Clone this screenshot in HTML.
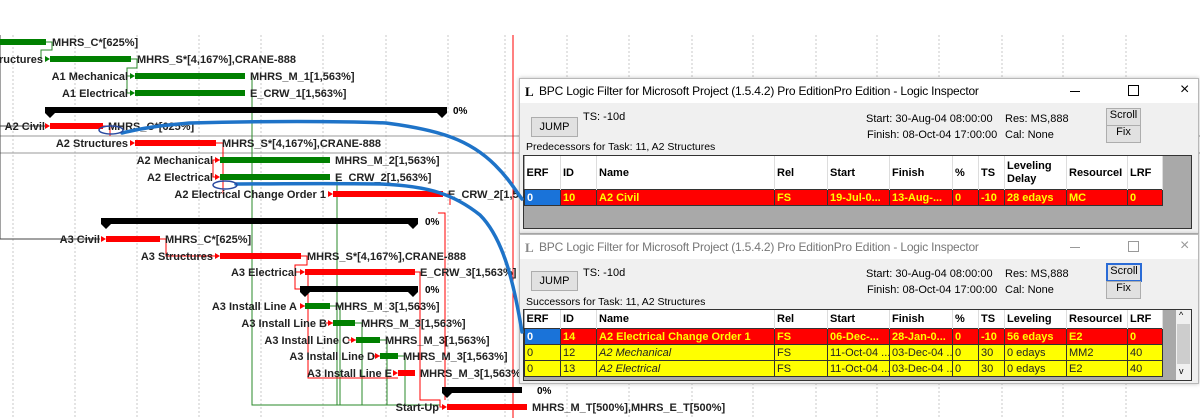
<!DOCTYPE html>
<html><head><meta charset="utf-8"><style>
body{margin:0;width:1200px;height:418px;overflow:hidden;background:#fff;position:relative;font-family:"Liberation Sans",Arial,sans-serif}
svg{position:absolute;left:0;top:0}
.dlg{position:absolute;left:519px;width:678px;background:#f0f0f0;border:1px solid #b8b8b8;box-shadow:0 0 4px rgba(0,0,0,.25);font-size:11px;color:#000}
.tb{height:24px;background:#fff;position:relative}
.tb .t{position:absolute;left:19px;top:5px;font-size:12px;letter-spacing:-.2px}
.ic{position:absolute;left:5px;top:5px;font:bold 13px "Liberation Serif",serif}
.btn{position:absolute;background:#e1e1e1;border:1px solid #adadad;text-align:center;font-size:11px}
.a{position:absolute;white-space:nowrap}
.mn{position:absolute;left:426px;top:12px;width:10px;height:1px;background:#000}
.grid{position:absolute;left:3px;width:667px;background:#a9a9a9;border:1px solid #333}
table{border-collapse:collapse;font-size:11px;table-layout:fixed;position:absolute;left:0;top:0}
td{border:1px solid #333;padding:0 2px;white-space:nowrap;overflow:hidden;height:15px}
.h td{background:#fff;font-weight:bold;height:33px;border:none;border-right:1px solid #ddd}
.h2 td{background:#fff;font-weight:bold;height:18px;border:none;border-right:1px solid #ddd}
.r td{background:#f00;color:#ff0;font-weight:bold}
.y td{background:#ff0;color:#222}
.y td.i{font-style:italic}
td.b{background:#1a73d9 !important;color:#fff !important}
</style></head><body>
<svg width="1200" height="418" font-family="Liberation Sans,Arial,sans-serif" font-size="11" font-weight="bold">
<g stroke="#c8c8c8" stroke-dasharray="2,2">
<line x1="13" y1="35" x2="13" y2="418"/><line x1="75" y1="35" x2="75" y2="418"/><line x1="137" y1="35" x2="137" y2="418"/><line x1="199" y1="35" x2="199" y2="418"/><line x1="261" y1="35" x2="261" y2="418"/><line x1="323" y1="35" x2="323" y2="418"/><line x1="386" y1="35" x2="386" y2="418"/><line x1="448" y1="35" x2="448" y2="418"/><line x1="505" y1="35" x2="505" y2="418"/><line x1="567" y1="35" x2="567" y2="418"/><line x1="629" y1="35" x2="629" y2="418"/><line x1="692" y1="35" x2="692" y2="418"/><line x1="753" y1="35" x2="753" y2="418"/><line x1="816" y1="35" x2="816" y2="418"/><line x1="877" y1="35" x2="877" y2="418"/><line x1="939" y1="35" x2="939" y2="418"/><line x1="1002" y1="35" x2="1002" y2="418"/><line x1="1063" y1="35" x2="1063" y2="418"/><line x1="1126" y1="35" x2="1126" y2="418"/>
</g>
<line x1="0" y1="136" x2="1200" y2="136" stroke="#999"/><line x1="0" y1="153" x2="1200" y2="153" stroke="#999"/>
<line x1="513" y1="35" x2="513" y2="418" stroke="#f00"/>
<g fill="none" stroke="#2a8a2a" stroke-width="1">
<path d="M46 42H52V50H41V59"/><path d="M131 59H137V68H127V93H133"/><path d="M127 76H133"/>
<path d="M252 76V405H300"/><path d="M337 177V405"/><path d="M252 405H440"/>
<path d="M330 306H340V405"/><path d="M355 323H362V405"/><path d="M380 340H387V405"/><path d="M398 356H405V405"/>
</g>
<g fill="none" stroke="#f00" stroke-width="1">
<path d="M103 126H110V136"/><path d="M216 143H223V160H213V177H218"/><path d="M223 160V194"/><path d="M443 194H450V205"/>
<path d="M0 126H45" stroke="#444"/><path d="M0 35V239H100" stroke="#444"/>
<path d="M160 239H166V256H218"/><path d="M301 256H307V265H295V289H303"/><path d="M295 272H303"/>
<path d="M308 272V378H398"/><path d="M415 272H420V400H440V407H445"/><path d="M438 213H445V400"/>
<path d="M310 306H304M333 323H326M356 340H348M380 356H372"/>
</g>
<g fill="#000">
<rect x="45" y="107" width="402" height="6"/><path d="M45 113h10l-5 5zM437 113h10l-5 5z"/>
<rect x="101" y="218" width="317" height="6"/><path d="M101 224h10l-5 5zM408 224h10l-5 5z"/>
<rect x="300" y="286" width="118" height="6"/><path d="M300 292h10l-5 5zM408 292h10l-5 5z"/>
<rect x="442" y="387" width="80" height="6"/><path d="M442 393h10l-5 5z"/>
</g>
<g font-size="10"><text x="453" y="114">0%</text><text x="425" y="225">0%</text><text x="425" y="293">0%</text><text x="537" y="394">0%</text></g>
<g fill="#008000">
<rect x="0" y="39" width="46" height="6"/><rect x="50" y="56" width="81" height="6"/><rect x="135" y="73" width="110" height="6"/><rect x="135" y="90" width="110" height="6"/>
<rect x="220" y="157" width="110" height="6"/><rect x="220" y="174" width="110" height="6"/>
<rect x="305" y="303" width="25" height="6"/><rect x="333" y="320" width="22" height="6"/><rect x="356" y="337" width="24" height="6"/><rect x="380" y="353" width="18" height="6"/>
</g>
<g fill="#f00">
<rect x="50" y="123" width="53" height="6"/><rect x="135" y="140" width="81" height="6"/><rect x="333" y="191" width="110" height="6"/>
<rect x="106" y="236" width="54" height="6"/><rect x="220" y="253" width="81" height="6"/><rect x="305" y="269" width="110" height="6"/>
<rect x="398" y="370" width="17" height="6"/><rect x="447" y="404" width="80" height="6"/>
</g>
<g fill="#222">
<text x="52" y="46">MHRS_C*[625%]</text>
<text x="43" y="63" text-anchor="end">ructures</text><text x="137" y="63">MHRS_S*[4,167%],CRANE-888</text>
<text x="128" y="80" text-anchor="end">A1 Mechanical</text><text x="250" y="80">MHRS_M_1[1,563%]</text>
<text x="128" y="97" text-anchor="end">A1 Electrical</text><text x="250" y="97">E_CRW_1[1,563%]</text>
<text x="45" y="130" text-anchor="end">A2 Civil</text><text x="108" y="130">MHRS_C*[625%]</text>
<text x="128" y="147" text-anchor="end">A2 Structures</text><text x="222" y="147">MHRS_S*[4,167%],CRANE-888</text>
<text x="213" y="164" text-anchor="end">A2 Mechanical</text><text x="335" y="164">MHRS_M_2[1,563%]</text>
<text x="213" y="181" text-anchor="end">A2 Electrical</text><text x="335" y="181">E_CRW_2[1,563%]</text>
<text x="326" y="198" text-anchor="end">A2 Electrical Change Order 1</text><text x="448" y="198">E_CRW_2[1,563</text>
<text x="100" y="243" text-anchor="end">A3 Civil</text><text x="165" y="243">MHRS_C*[625%]</text>
<text x="213" y="260" text-anchor="end">A3 Structures</text><text x="307" y="260">MHRS_S*[4,167%],CRANE-888</text>
<text x="297" y="276" text-anchor="end">A3 Electrical</text><text x="420" y="276">E_CRW_3[1,563%]</text>
<text x="297" y="310" text-anchor="end">A3 Install Line A</text><text x="335" y="310">MHRS_M_3[1,563%]</text>
<text x="327" y="327" text-anchor="end">A3 Install Line B</text><text x="361" y="327">MHRS_M_3[1,563%]</text>
<text x="350" y="344" text-anchor="end">A3 Install Line C</text><text x="385" y="344">MHRS_M_3[1,563%]</text>
<text x="375" y="360" text-anchor="end">A3 Install Line D</text><text x="403" y="360">MHRS_M_3[1,563%]</text>
<text x="392" y="377" text-anchor="end">A3 Install Line E</text><text x="420" y="377">MHRS_M_3[1,563%]</text>
<text x="439" y="411" text-anchor="end">Start-Up</text><text x="532" y="411">MHRS_M_T[500%],MHRS_E_T[500%]</text>
</g>
<g fill="#f00"><path d="M45 123l5 3-5 3zM130 140l5 3-5 3zM215 157l5 3-5 3zM215 174l5 3-5 3zM328 191l5 3-5 3zM101 236l5 3-5 3zM215 253l5 3-5 3zM300 269l5 3-5 3zM300 303l5 3-5 3zM328 320l5 3-5 3zM351 337l5 3-5 3zM375 353l5 3-5 3zM393 370l5 3-5 3zM442 404l5 3-5 3z"/></g>
<g fill="#008000"><path d="M45 56l5 3-5 3zM130 73l5 3-5 3zM130 90l5 3-5 3z"/></g>
</svg>
<div class="dlg" style="top:78px;height:154px">
<div class="tb"><span class="ic">L</span><span class="t">BPC Logic Filter for Microsoft Project  (1.5.4.2)  Pro EditionPro Edition - Logic Inspector</span>
<span class="mn" style="left:550px"></span><span class="a" style="left:608px;top:6px;width:9px;height:9px;border:1px solid #000"></span><span class="a" style="left:660px;top:2px;font-size:16px">×</span></div>
<div class="btn" style="left:11px;top:38px;width:45px;height:18px;line-height:18px">JUMP</div>
<span class="a" style="left:63px;top:32px">TS: -10d</span>
<span class="a" style="left:346px;top:34px">Start: 30-Aug-04 08:00:00</span><span class="a" style="left:347px;top:50px">Finish: 08-Oct-04 17:00:00</span>
<span class="a" style="left:485px;top:34px">Res: MS,888</span><span class="a" style="left:485px;top:50px">Cal: None</span>
<div class="btn" style="left:586px;top:29px;width:33px;height:16px">Scroll</div><div class="btn" style="left:586px;top:46px;width:33px;height:16px">Fix</div>
<span class="a" style="left:6px;top:62px;font-size:10.5px">Predecessors for Task: 11, A2 Structures</span>
<div class="grid" style="top:76px;height:72px">
<table style="width:638px"><colgroup><col style="width:36px"><col style="width:36px"><col style="width:178px"><col style="width:53px"><col style="width:62px"><col style="width:63px"><col style="width:26px"><col style="width:26px"><col style="width:62px"><col style="width:61px"><col style="width:35px"></colgroup>
<tr class="h"><td>ERF</td><td>ID</td><td>Name</td><td>Rel</td><td>Start</td><td>Finish</td><td>%</td><td>TS</td><td style="white-space:normal;line-height:13px">Leveling Delay</td><td>ResourceI</td><td>LRF</td></tr>
<tr class="r"><td class="b">0</td><td>10</td><td>A2 Civil</td><td>FS</td><td>19-Jul-0...</td><td>13-Aug-...</td><td>0</td><td>-10</td><td>28 edays</td><td>MC</td><td>0</td></tr></table></div>
</div>
<div class="dlg" style="top:234px;height:148px">
<div class="tb"><span class="ic" style="color:#888">L</span><span class="t" style="color:#777">BPC Logic Filter for Microsoft Project  (1.5.4.2)  Pro EditionPro Edition - Logic Inspector</span>
<span class="mn" style="left:550px;background:#999"></span><span class="a" style="left:608px;top:6px;width:9px;height:9px;border:1px solid #999"></span><span class="a" style="left:660px;top:2px;font-size:16px;color:#999">×</span></div>
<div class="btn" style="left:11px;top:36px;width:45px;height:18px;line-height:18px">JUMP</div>
<span class="a" style="left:63px;top:32px">TS: -10d</span>
<span class="a" style="left:346px;top:33px">Start: 30-Aug-04 08:00:00</span><span class="a" style="left:347px;top:49px">Finish: 08-Oct-04 17:00:00</span>
<span class="a" style="left:485px;top:33px">Res: MS,888</span><span class="a" style="left:485px;top:49px">Cal: None</span>
<div class="btn" style="left:586px;top:28px;width:32px;height:15px;border:2px solid #2a6bd6">Scroll</div><div class="btn" style="left:586px;top:46px;width:33px;height:16px">Fix</div>
<span class="a" style="left:6px;top:61px;font-size:10.5px">Successors for Task: 11, A2 Structures</span>
<div class="grid" style="top:74px;height:70px">
<table style="width:638px"><colgroup><col style="width:36px"><col style="width:36px"><col style="width:178px"><col style="width:53px"><col style="width:62px"><col style="width:63px"><col style="width:26px"><col style="width:26px"><col style="width:62px"><col style="width:61px"><col style="width:35px"></colgroup>
<tr class="h2"><td>ERF</td><td>ID</td><td>Name</td><td>Rel</td><td>Start</td><td>Finish</td><td>%</td><td>TS</td><td>Leveling</td><td>ResourceI</td><td>LRF</td></tr>
<tr class="r"><td class="b">0</td><td>14</td><td>A2 Electrical Change Order 1</td><td>FS</td><td>06-Dec-...</td><td>28-Jan-0...</td><td>0</td><td>-10</td><td>56 edays</td><td>E2</td><td>0</td></tr>
<tr class="y"><td>0</td><td>12</td><td class="i">A2 Mechanical</td><td>FS</td><td>11-Oct-04 ...</td><td>03-Dec-04 ...</td><td>0</td><td>30</td><td>0 edays</td><td>MM2</td><td>40</td></tr>
<tr class="y"><td>0</td><td>13</td><td class="i">A2 Electrical</td><td>FS</td><td>11-Oct-04 ...</td><td>03-Dec-04 ...</td><td>0</td><td>30</td><td>0 edays</td><td>E2</td><td>40</td></tr></table>
<div class="a" style="left:652px;top:0;width:15px;height:70px;background:#f0f0f0"><div style="position:absolute;top:14px;left:1px;width:13px;height:40px;background:#cdcdcd"></div><span class="a" style="left:3px;top:0;font-size:9px">^</span><span class="a" style="left:3px;top:56px;font-size:9px">v</span></div>
</div>
</div>
<svg width="1200" height="418" style="pointer-events:none">
<g fill="none" stroke="#1e73c8" stroke-width="3.5" stroke-linecap="round">
<path d="M122 133C150 126 170 125 190 123C260 121 340 121 386 123C440 130 470 140 495 165C510 180 515 190 522 199"/>
<path d="M236 184C270 184 320 183 380 184C430 186 455 195 480 215C505 240 515 290 522 332"/>
</g>
<g fill="none" stroke="#2a4aa0" stroke-width="1.5"><ellipse cx="111" cy="130" rx="12" ry="4"/><ellipse cx="225" cy="185" rx="12" ry="4"/></g>
</svg>
</body></html>
